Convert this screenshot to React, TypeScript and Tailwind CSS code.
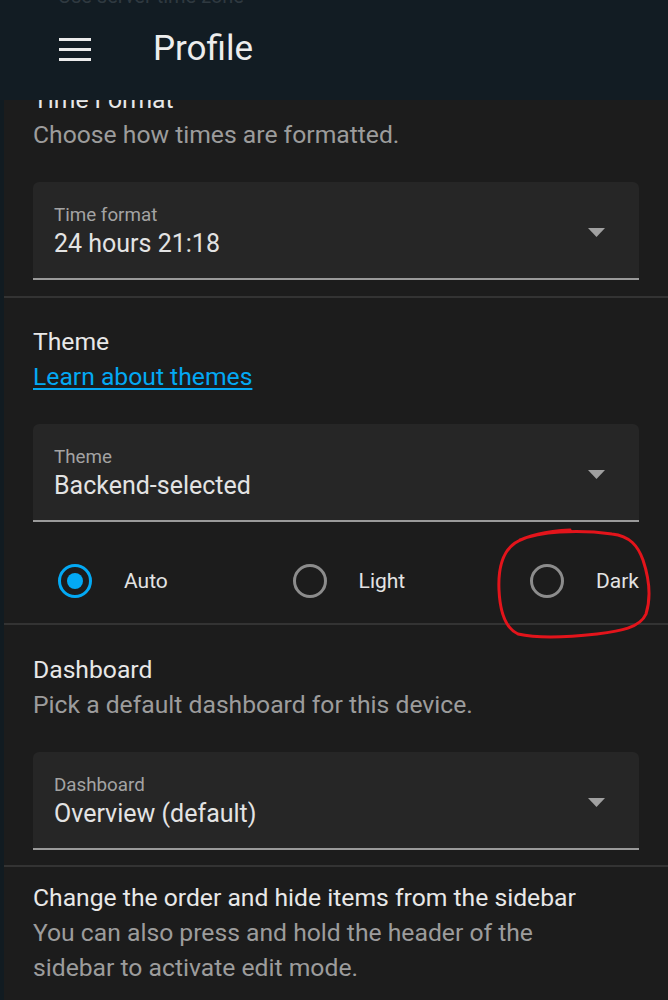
import React from 'react';

const font = { fontFamily: 'Roboto, "Noto Sans", sans-serif' };

const SelectField: React.FC<{ label: string; value: string }> = ({ label, value }) => (
  <div className="flex items-center justify-between rounded-t-[6px] bg-[#262626] border-b-2 border-[#9a9a9a] h-[98px] pl-[21px] pr-[34px]">
    <div className="flex flex-col pt-[3px]">
      <span className="text-[18.8px] leading-[20px] text-[#a3a3a3]">{label}</span>
      <span className="mt-[5px] text-[25px] leading-[28px] text-[#e3e3e3]">{value}</span>
    </div>
    <svg width="17" height="9" viewBox="0 0 17 9" className="mt-[4px]">
      <path d="M0 0 L17 0 L8.5 9 Z" fill="#a0a0a0" />
    </svg>
  </div>
);

const Radio: React.FC<{ label: string; checked?: boolean }> = ({ label, checked }) => (
  <div className="flex items-center gap-[32px]">
    <div
      className={`w-[34px] h-[34px] rounded-full border-[3.5px] flex items-center justify-center ${
        checked ? 'border-[#03a9f4]' : 'border-[#8c8c8c]'
      }`}
    >
      {checked && <div className="w-[16px] h-[16px] rounded-full bg-[#03a9f4]" />}
    </div>
    <span className="text-[21px] leading-[28px] text-[#e3e3e3]">{label}</span>
  </div>
);

const SectionHead: React.FC<{ title: string; children: React.ReactNode }> = ({ title, children }) => (
  <div className="px-[29px]">
    <div className="text-[24.7px] leading-[35px] text-[#e8e8e8]">{title}</div>
    {children}
  </div>
);

export default function App() {
  return (
    <div className="relative h-[1000px] w-full overflow-hidden bg-[#111b21]" style={font}>
      <header className="absolute inset-x-0 top-0 z-10 h-[100px] bg-[#121c23] flex items-center">
        <span className="absolute left-[58px] top-[-19px] text-[20px] text-[#2f3940]">Use server time zone</span>
        <div className="ml-[59px] flex flex-col gap-[7px] mt-[-2px]">
          <span className="block w-[32px] h-[3px] bg-[#ebebeb]" />
          <span className="block w-[32px] h-[3px] bg-[#ebebeb]" />
          <span className="block w-[32px] h-[3px] bg-[#ebebeb]" />
        </div>
        <h1 className="ml-[62px] text-[35px] leading-[40px] text-[#ededed] mt-[-2px]">Profile</h1>
      </header>

      <main className="ml-[4px] bg-[#1c1c1c] pt-[82px] min-h-[1000px]">
        {/* Time format */}
        <SectionHead title="Time Format">
          <div className="text-[24.7px] leading-[35px] text-[#9c9c9c]">Choose how times are formatted.</div>
        </SectionHead>
        <div className="px-[29px] pt-[30px] pb-[16px]">
          <SelectField label="Time format" value="24 hours 21:18" />
        </div>
        <div className="h-[2px] bg-[#333333]" />

        {/* Theme */}
        <div className="pt-[26px]">
          <SectionHead title="Theme">
            <a className="block text-[24.7px] leading-[35px] text-[#03a9f4] underline underline-offset-[3px] decoration-[1.5px]">
              Learn about themes
            </a>
          </SectionHead>
        </div>
        <div className="px-[29px] pt-[30px]">
          <SelectField label="Theme" value="Backend-selected" />
          <div className="flex items-center justify-between pl-[25px] pt-[42px] pb-[25px]">
            <Radio label="Auto" checked />
            <Radio label="Light" />
            <Radio label="Dark" />
          </div>
        </div>
        <div className="h-[2px] bg-[#333333]" />

        {/* Dashboard */}
        <div className="pt-[27px]">
          <SectionHead title="Dashboard">
            <div className="text-[24.7px] leading-[35px] text-[#9c9c9c]">Pick a default dashboard for this device.</div>
          </SectionHead>
        </div>
        <div className="px-[29px] pt-[30px] pb-[15px]">
          <SelectField label="Dashboard" value="Overview (default)" />
        </div>
        <div className="h-[2px] bg-[#333333]" />

        {/* Sidebar */}
        <div className="pt-[13px]">
          <SectionHead title="Change the order and hide items from the sidebar">
            <div className="text-[24.7px] leading-[35px] text-[#9c9c9c] max-w-[530px]">
              You can also press and hold the header of the sidebar to activate edit mode.
            </div>
          </SectionHead>
        </div>
      </main>

      {/* red annotation drawn over the screenshot */}
      <svg className="absolute left-0 top-0 pointer-events-none" width="668" height="1000" viewBox="0 0 668 1000">
        <path
          d="M520 540 C 540 532, 575 529, 612 534 C 630 536, 638 546, 643 560 C 648 575, 652 595, 646 614 C 640 628, 620 631, 597 634 C 570 637, 540 639, 518 634 C 505 628, 500 612, 499 590 C 498 568, 502 552, 515 543 C 528 535, 548 531, 570 530"
          fill="none"
          stroke="#e3141b"
          strokeWidth="3"
          strokeLinecap="round"
        />
      </svg>
    </div>
  );
}
